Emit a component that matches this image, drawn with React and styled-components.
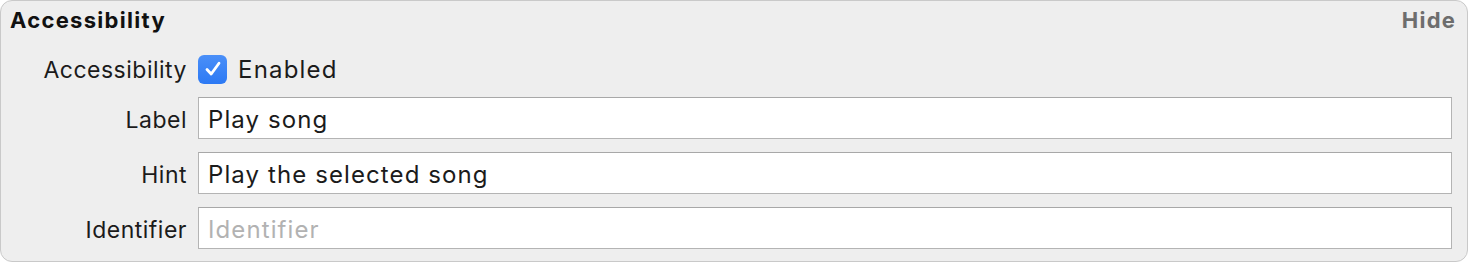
import React from "react";
import styled, { createGlobalStyle } from "styled-components";

const Global = createGlobalStyle`
  html, body { margin: 0; padding: 0; background: #ffffff; }
  body { font-family: Inter, "Liberation Sans", sans-serif; -webkit-font-smoothing: antialiased; }
`;

const Panel = styled.section`
  box-sizing: border-box;
  width: 1468px;
  height: 262px;
  background: #eeeeee;
  border: 1px solid #c9c9c9;
  border-radius: 12px;
  padding: 5px 11px 12px 9px;
  display: flex;
  flex-direction: column;
`;

const Header = styled.header`
  display: flex;
  justify-content: space-between;
  align-items: center;
  height: 28px;
`;

const Title = styled.h2`
  margin: 0;
  font-size: 22px;
  font-weight: 700;
  color: #111111;
  letter-spacing: 1.3px;
`;

const HideButton = styled.button`
  border: 0;
  background: none;
  padding: 0;
  font: inherit;
  font-size: 22px;
  font-weight: 700;
  letter-spacing: 1.2px;
  color: #6d6d6d;
  cursor: pointer;
`;

const Form = styled.div`
  margin-top: 20px;
  display: grid;
  grid-template-columns: 177px 1fr;
  grid-template-rows: 30px 42px 42px 42px;
  column-gap: 11px;
  row-gap: 13px;
  padding-right: 4px;
`;

const FieldLabel = styled.label`
  justify-self: end;
  align-self: center;
  padding-top: ${(p) => (p.$field ? "3px" : "1px")};
  font-size: 23px;
  letter-spacing: 0.5px;
  color: #1b1b1b;
  white-space: nowrap;
`;

const CheckRow = styled.label`
  display: flex;
  align-items: center;
  gap: 11px;
  font-size: 24px;
  letter-spacing: 1.2px;
  color: #1b1b1b;
`;

const CheckBox = styled.span`
  width: 29px;
  height: 29px;
  box-sizing: border-box;
  border-radius: 6px;
  background: linear-gradient(#4a8ff8, #2c79f4);
  display: flex;
  align-items: center;
  justify-content: center;
`;

const TextField = styled.input`
  box-sizing: border-box;
  width: 100%;
  height: 42px;
  margin: 0;
  border: 1px solid #b4b4b4;
  border-top-color: #a8a8a8;
  background: #ffffff;
  padding: 2px 9px 0;
  font-family: inherit;
  font-size: 24px;
  letter-spacing: 1.1px;
  color: #1b1b1b;
  outline: none;
  &::placeholder { color: #b2b2b2; }
`;

export default function App() {
  return (
    <>
      <Global />
      <Panel>
        <Header>
          <Title>Accessibility</Title>
          <HideButton>Hide</HideButton>
        </Header>
        <Form>
          <FieldLabel>Accessibility</FieldLabel>
          <CheckRow>
            <CheckBox>
              <svg width="20" height="20" viewBox="0 0 20 20">
                <path d="M4 10.5 L8.2 15 L16 4.2" fill="none" stroke="#fff" strokeWidth="2.8" strokeLinecap="round" strokeLinejoin="round" />
              </svg>
            </CheckBox>
            Enabled
          </CheckRow>
          <FieldLabel $field>Label</FieldLabel>
          <TextField defaultValue="Play song" />
          <FieldLabel $field>Hint</FieldLabel>
          <TextField defaultValue="Play the selected song" />
          <FieldLabel $field>Identifier</FieldLabel>
          <TextField placeholder="Identifier" />
        </Form>
      </Panel>
    </>
  );
}
